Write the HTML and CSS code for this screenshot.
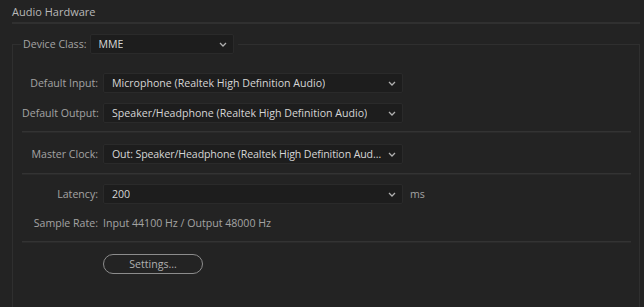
FILE: index.html
```html
<!DOCTYPE html>
<html lang="en">
<head>
    <meta charset="UTF-8">
    <title>Audio Hardware</title>
    <link rel="stylesheet" href="styles.css">
</head>
<body>
    <div class="panel">
        <div class="panel-title">Audio Hardware</div>

        <fieldset class="group">
            <legend class="group-legend">
                <span class="label">Device Class:</span>
                <div class="dropdown dropdown-small">
                    <span class="dropdown-text">MME</span>
                    <svg class="chevron" viewBox="0 0 8 5"><path d="M1 1l3 3 3-3"></path></svg>
                </div>
            </legend>

            <div class="rows">
                <div class="row">
                    <span class="label">Default Input:</span>
                    <div class="dropdown">
                        <span class="dropdown-text">Microphone (Realtek High Definition Audio)</span>
                        <svg class="chevron" viewBox="0 0 8 5"><path d="M1 1l3 3 3-3"></path></svg>
                    </div>
                </div>
                <div class="row row-tight">
                    <span class="label">Default Output:</span>
                    <div class="dropdown">
                        <span class="dropdown-text">Speaker/Headphone (Realtek High Definition Audio)</span>
                        <svg class="chevron" viewBox="0 0 8 5"><path d="M1 1l3 3 3-3"></path></svg>
                    </div>
                </div>

                <hr class="divider">

                <div class="row row-after-divider">
                    <span class="label">Master Clock:</span>
                    <div class="dropdown">
                        <span class="dropdown-text dropdown-text-compact">Out: Speaker/Headphone (Realtek High Definition Aud…</span>
                        <svg class="chevron" viewBox="0 0 8 5"><path d="M1 1l3 3 3-3"></path></svg>
                    </div>
                </div>

                <hr class="divider divider-loose">

                <div class="row row-after-divider">
                    <span class="label">Latency:</span>
                    <div class="dropdown">
                        <span class="dropdown-text">200</span>
                        <svg class="chevron" viewBox="0 0 8 5"><path d="M1 1l3 3 3-3"></path></svg>
                    </div>
                    <span class="unit">ms</span>
                </div>
                <div class="row row-loose">
                    <span class="label">Sample Rate:</span>
                    <span class="value">Input 44100 Hz / Output 48000 Hz</span>
                </div>

                <hr class="divider">

                <div class="row row-after-divider">
                    <span></span>
                    <button class="settings-button">Settings...</button>
                </div>
            </div>
        </fieldset>
    </div>
</body>
</html>
```

FILE: styles.css
```css
* {
    margin: 0;
    padding: 0;
    box-sizing: border-box;
}

body {
    background: #232323;
    color: #a3a3a3;
    font-family: "Open Sans", "Noto Sans", sans-serif;
    font-size: 10.6px;
    height: 307px;
    overflow: hidden;
}

.panel {
    padding: 0 4px 0 12px;
    height: 100%;
    display: flex;
    flex-direction: column;
}

.panel-title {
    height: 24px;
    line-height: 23px;
    font-size: 11px;
    color: #b8b8b8;
    border-bottom: 2px solid #303030;
}

.group {
    flex: 1;
    margin-top: 10px;
    border: 1px solid #2f2f2f;
    border-bottom: none;
    padding: 0;
    min-width: 0;
}

.group-legend {
    display: flex;
    align-items: center;
    gap: 3px;
    margin-left: 8px;
    padding: 0 4px 0 2px;
}

.label {
    color: #a3a3a3;
    text-align: right;
    white-space: nowrap;
}

.dropdown {
    display: flex;
    align-items: center;
    justify-content: space-between;
    gap: 3px;
    height: 20px;
    padding: 0 6px 0 8px;
    background: #1d1d1d;
    border: 1px solid #2a2a2a;
    border-radius: 2px;
    color: #d6d6d6;
    white-space: nowrap;
}

.dropdown-text {
    overflow: hidden;
}

.dropdown-text-compact {
    letter-spacing: -0.12px;
}

.dropdown-small {
    width: 144px;
}

.chevron {
    flex-shrink: 0;
    width: 8px;
    height: 5px;
    fill: none;
    stroke: #b0b0b0;
    stroke-width: 1.3;
}

.rows {
    padding: 19px 8px 0 9px;
    display: flex;
    flex-direction: column;
}

.row {
    display: grid;
    grid-template-columns: 76px 300px auto;
    column-gap: 5px;
    align-items: center;
    height: 20px;
}

.row-tight {
    margin-top: 10px;
}

.row-after-divider {
    margin-top: 11px;
}

.row-loose {
    margin-top: 9px;
}

.row .dropdown {
    width: 300px;
}

.unit {
    margin-left: 2px;
}

.value {
    color: #a3a3a3;
    white-space: nowrap;
}

.divider {
    margin-top: 8px;
    border: none;
    border-top: 1px solid #333333;
    border-bottom: 1px solid #2a2a2a;
}

.divider-loose {
    margin-top: 9px;
}

.divider-loose + .row-after-divider {
    margin-top: 9px;
}

.settings-button {
    width: 100px;
    height: 20px;
    background: transparent;
    border: 1px solid #8c8c8c;
    border-radius: 10px;
    color: #b0b0b0;
    font-family: inherit;
    font-size: 10.6px;
}
```
